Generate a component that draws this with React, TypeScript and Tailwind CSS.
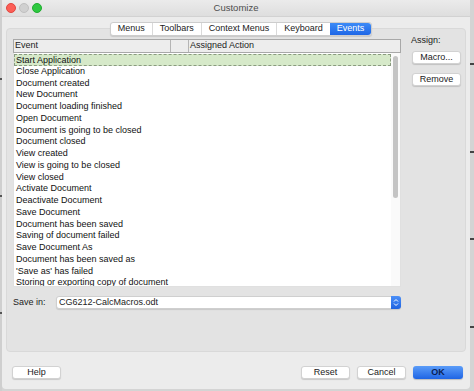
import React from 'react'

const events = [
    'Start Application',
    'Close Application',
    'Document created',
    'New Document',
    'Document loading finished',
    'Open Document',
    'Document is going to be closed',
    'Document closed',
    'View created',
    'View is going to be closed',
    'View closed',
    'Activate Document',
    'Deactivate Document',
    'Save Document',
    'Document has been saved',
    'Saving of document failed',
    'Save Document As',
    'Document has been saved as',
    "'Save as' has failed",
    'Storing or exporting copy of document',
]

const tabs = ['Menus', 'Toolbars', 'Context Menus', 'Keyboard', 'Events']

function Btn({ label }: { label: string }) {
    return (
        <div className="w-[49px] h-[13px] flex items-center justify-center bg-white rounded-[3px] border border-[#d2d2d2] shadow-[0_1px_1px_rgba(0,0,0,0.15)] text-[9px] text-[#222]">
            {label}
        </div>
    )
}

export default function App() {
    return (
        <div
            className="w-[474px] h-[391px] flex bg-[#d4d4d4] overflow-hidden"
            style={{ fontFamily: '"Liberation Sans", Arial, sans-serif' }}
        >
            <div className="w-[2px] flex flex-col justify-around py-[20px] bg-[#cfcfcf]">
                <div className="h-[2px] bg-[#555]" />
                <div className="h-[2px] bg-[#555]" />
                <div className="h-[2px] bg-[#555]" />
            </div>
            <div className="w-[468px] h-[389px] flex flex-col bg-[#ececec] rounded-b-[4px]">
                {/* title bar */}
                <div className="h-[17px] flex items-center relative bg-gradient-to-b from-[#ebebeb] to-[#dedede] border-b border-[#d2d2d2]">
                    <div className="flex gap-[3px] pl-[4px]">
                        <div className="w-[10px] h-[10px] rounded-full bg-[#fc5f57] border border-[#e2463f]" />
                        <div className="w-[10px] h-[10px] rounded-full bg-[#d0d0d0] border border-[#c0c0c0]" />
                        <div className="w-[10px] h-[10px] rounded-full bg-[#2ec840] border border-[#20ad30]" />
                    </div>
                    <div className="absolute inset-0 flex items-center justify-center text-[9.5px] text-[#4d4d4d]">
                        Customize
                    </div>
                </div>

                {/* panel */}
                <div className="relative mx-[4px] mt-[11px] h-[324px] bg-[#e3e3e3] border border-[#d9d9d9] rounded-[4px]">
                    <div className="absolute -top-[7px] left-0 right-0 flex justify-center">
                        <div className="flex h-[14px] bg-white rounded-[3px] border border-[#cdcdcd] shadow-[0_1px_1px_rgba(0,0,0,0.12)] text-[9px] text-[#222] ml-[10px]">
                            {tabs.map((t, i) => (
                                <div
                                    key={t}
                                    className={
                                        t === 'Events'
                                            ? 'px-[7px] flex items-center bg-gradient-to-b from-[#3d8bf7] to-[#1e66e6] text-white rounded-r-[3px]'
                                            : `px-[7px] flex items-center ${i > 0 ? 'border-l border-[#dadada]' : ''}`
                                    }
                                >
                                    {t}
                                </div>
                            ))}
                        </div>
                    </div>

                    <div className="flex pt-[10px] pl-[6px]">
                        {/* table */}
                        <div className="w-[388px] flex flex-col">
                            <div className="h-[14px] flex bg-[#ededed] border border-[#a8a8a8] text-[9px] text-[#222]">
                                <div className="w-[157px] pl-[1px] border-r border-[#b5b5b5] flex items-center">Event</div>
                                <div className="w-[18px] border-r border-[#b5b5b5]" />
                                <div className="flex-1 pl-[1px] flex items-center">Assigned Action</div>
                            </div>
                            <div className="h-[234px] flex bg-white border-x border-b border-[#e0e0e0] overflow-hidden">
                                <div className="flex-1 pt-[1px]">
                                    {events.map((e, i) => (
                                        <div
                                            key={e}
                                            className={
                                                i === 0
                                                    ? 'h-[11.75px] leading-[10px] pl-[1px] text-[9px] text-[#111] bg-[#d6e9c9] border border-dashed border-[#8a9a80]'
                                                    : 'h-[11.75px] leading-[11.75px] pl-[2px] text-[9px] text-[#111]'
                                            }
                                        >
                                            {e}
                                        </div>
                                    ))}
                                </div>
                                <div className="w-[9px] pt-[3px] flex justify-center bg-[#fafafa]">
                                    <div className="w-[5px] h-[142px] rounded-full bg-[#c4c4c4]" />
                                </div>
                            </div>
                        </div>

                        {/* assign */}
                        <div className="flex flex-col pl-[10px] -mt-[5px]">
                            <div className="text-[9px] text-[#222] h-[13px] leading-[13px]">Assign:</div>
                            <div className="mt-[4px] pl-[1px]">
                                <Btn label="Macro..." />
                            </div>
                            <div className="mt-[9px] pl-[1px]">
                                <Btn label="Remove" />
                            </div>
                        </div>
                    </div>

                    {/* save in */}
                    <div className="flex items-center pl-[6px] mt-[9px] text-[9px] text-[#222]">
                        <div className="w-[43px]">Save in:</div>
                        <div className="w-[345px] h-[13px] flex items-center bg-white border border-[#cfcfcf] rounded-[3px] shadow-[0_1px_1px_rgba(0,0,0,0.12)]">
                            <div className="flex-1 pl-[2px] leading-[11px]">CG6212-CalcMacros.odt</div>
                            <div className="w-[10px] h-[13px] -mr-[1px] flex items-center justify-center bg-gradient-to-b from-[#4a8ff8] to-[#1f63e0] rounded-r-[3px]">
                                <svg width="6" height="9" viewBox="0 0 6 9">
                                    <path d="M1 3.5 L3 1.5 L5 3.5 M1 5.5 L3 7.5 L5 5.5" stroke="white" strokeWidth="1" fill="none" />
                                </svg>
                            </div>
                        </div>
                    </div>
                </div>

                {/* bottom buttons */}
                <div className="flex items-center mt-[14px] pl-[10px] pr-[7px]">
                    <Btn label="Help" />
                    <div className="flex-1" />
                    <div className="flex gap-[7px]">
                        <Btn label="Reset" />
                        <Btn label="Cancel" />
                        <div className="w-[50px] h-[13px] flex items-center justify-center rounded-[3px] bg-gradient-to-b from-[#5b9cf8] to-[#1e64e4] text-[9px] text-[#0a1f55] font-bold shadow-[0_1px_1px_rgba(0,0,0,0.2)]">
                            OK
                        </div>
                    </div>
                </div>
            </div>
            <div className="w-[4px] bg-[#d4d4d4] flex flex-col justify-around py-[20px]">
                <div className="h-[2px] bg-[#444]" />
                <div className="h-[2px] bg-[#444]" />
                <div className="h-[2px] bg-[#444]" />
                <div className="h-[2px] bg-[#444]" />
            </div>
        </div>
    )
}
